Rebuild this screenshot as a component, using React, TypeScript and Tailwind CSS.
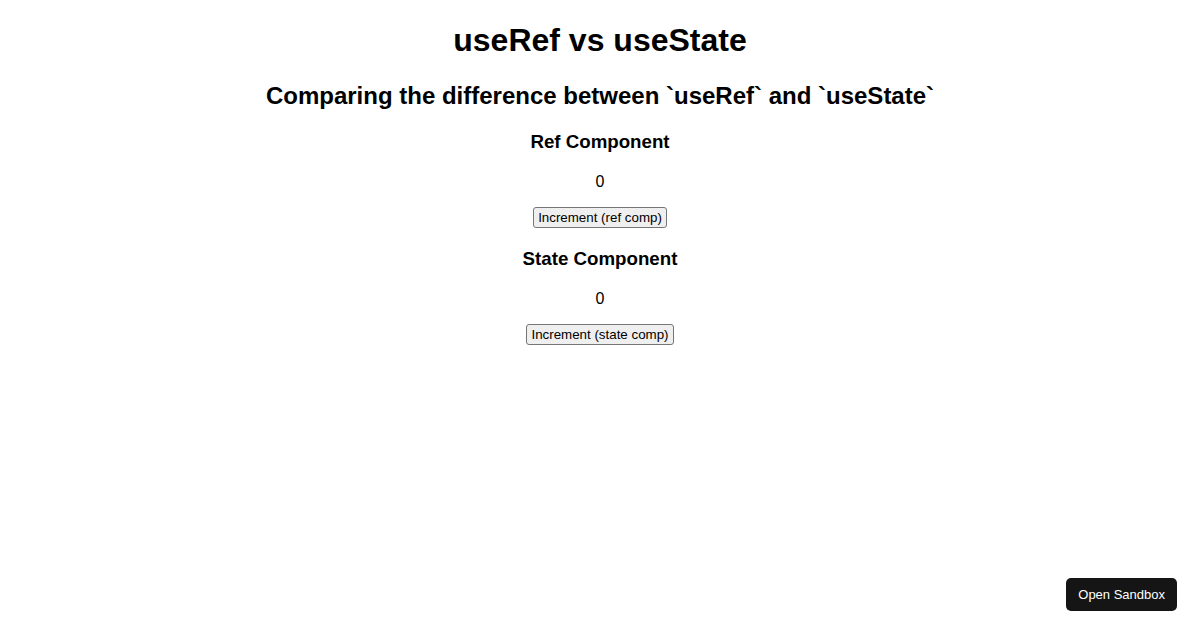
export default function App() {
  return (
    <div className="relative h-[630px] w-full bg-white text-black font-['Liberation_Sans',Arial,sans-serif]">
      <div className="flex flex-col items-center text-center">
        <h1 className="mt-[21px] mb-[23px] text-[32px] font-bold leading-[38px]">useRef vs useState</h1>
        <h2 className="mb-[21px] text-[24px] font-bold leading-[28px]">
          Comparing the difference between `useRef` and `useState`
        </h2>
        <Counter title="Ref Component" label="Increment (ref comp)" />
        <Counter title="State Component" label="Increment (state comp)" />
      </div>
      <button
        type="button"
        className="absolute bottom-[19px] right-[23px] rounded-[5px] bg-[#151515] px-[12px] py-[8px] text-[13px] leading-[17px] text-white"
      >
        Open Sandbox
      </button>
    </div>
  );
}

function Counter({ title, label }: { title: string; label: string }) {
  return (
    <div className="flex flex-col items-center">
      <h3 className="mb-[20px] text-[18.72px] font-bold leading-[22px]">{title}</h3>
      <p className="mb-[16px] text-base leading-[18px]">0</p>
      <button
        type="button"
        className="mb-[20px] rounded-[3px] border border-[#767676] bg-[#efefef] px-[4.5px] py-[1px] text-[13.33px] leading-[17px]"
      >
        {label}
      </button>
    </div>
  );
}
